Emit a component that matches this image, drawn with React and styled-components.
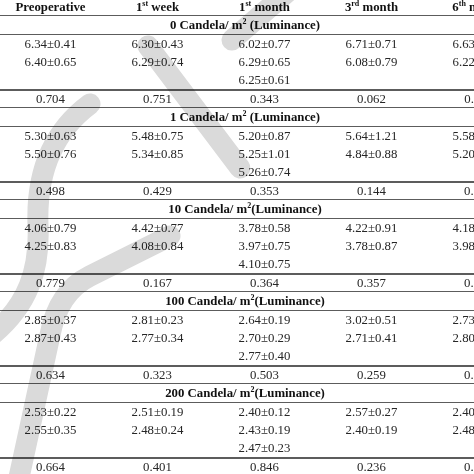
import React from 'react';
import styled, { createGlobalStyle } from 'styled-components';

const GlobalStyle = createGlobalStyle`
  html, body {
    margin: 0;
    padding: 0;
    background: #fff;
    overflow: hidden;
  }
  body {
    font-family: "Liberation Serif", "Times New Roman", serif;
    color: #222;
  }
`;

const blocks = [
  {
    lum: '0',
    gap: true,
    rows: [
      ['6.34±0.41', '6.30±0.43', '6.02±0.77', '6.71±0.71', '6.63±0.72'],
      ['6.40±0.65', '6.29±0.74', '6.29±0.65', '6.08±0.79', '6.22±0.81'],
      ['', '', '6.25±0.61', '', ''],
    ],
    p: ['0.704', '0.751', '0.343', '0.062', '0.118'],
  },
  {
    lum: '1',
    gap: true,
    rows: [
      ['5.30±0.63', '5.48±0.75', '5.20±0.87', '5.64±1.21', '5.58±0.93'],
      ['5.50±0.76', '5.34±0.85', '5.25±1.01', '4.84±0.88', '5.20±0.86'],
      ['', '', '5.26±0.74', '', ''],
    ],
    p: ['0.498', '0.429', '0.353', '0.144', '0.212'],
  },
  {
    lum: '10',
    rows: [
      ['4.06±0.79', '4.42±0.77', '3.78±0.58', '4.22±0.91', '4.18±0.80'],
      ['4.25±0.83', '4.08±0.84', '3.97±0.75', '3.78±0.87', '3.98±0.77'],
      ['', '', '4.10±0.75', '', ''],
    ],
    p: ['0.779', '0.167', '0.364', '0.357', '0.409'],
  },
  {
    lum: '100',
    rows: [
      ['2.85±0.37', '2.81±0.23', '2.64±0.19', '3.02±0.51', '2.73±0.32'],
      ['2.87±0.43', '2.77±0.34', '2.70±0.29', '2.71±0.41', '2.80±0.30'],
      ['', '', '2.77±0.40', '', ''],
    ],
    p: ['0.634', '0.323', '0.503', '0.259', '0.312'],
  },
  {
    lum: '200',
    rows: [
      ['2.53±0.22', '2.51±0.19', '2.40±0.12', '2.57±0.27', '2.40±0.21'],
      ['2.55±0.35', '2.48±0.24', '2.43±0.19', '2.40±0.19', '2.48±0.25'],
      ['', '', '2.47±0.23', '', ''],
    ],
    p: ['0.664', '0.401', '0.846', '0.236', '0.317'],
  },
];

const headers = [
  ['Preoperative'],
  ['1', 'st', ' week'],
  ['1', 'st', ' month'],
  ['3', 'rd', ' month'],
  ['6', 'th', ' month'],
];

const Page = styled.div`
  position: relative;
  width: 474px;
  height: 474px;
  overflow: hidden;
`;

const Table = styled.div`
  width: 535px;
  margin-left: -3px;
  font-size: 12.8px;
`;

const Row = styled.div`
  display: grid;
  grid-template-columns: repeat(5, 107px);
  height: ${(p) => p.$h}px;
  border-bottom: ${(p) => p.$line}px solid #5c5c5c;
`;

const Cell = styled.div`
  display: flex;
  align-items: center;
  justify-content: center;
  white-space: nowrap;
  font-weight: ${(p) => (p.$bold ? 700 : 400)};
  color: ${(p) => (p.$bold ? '#111' : '#262626')};
`;

const SpanRow = styled.div`
  display: flex;
  align-items: center;
  justify-content: center;
  height: 18px;
  padding-right: 39px;
  border-bottom: 1px solid #5c5c5c;
  font-weight: 700;
  color: #111;
  white-space: nowrap;
`;

const Sup = styled.sup`
  font-size: 8px;
  vertical-align: 5px;
  line-height: 0;
`;

const Mark = styled.svg`
  position: absolute;
  left: 0;
  top: 0;
  width: 474px;
  height: 474px;
  pointer-events: none;
  mix-blend-mode: multiply;
`;

const Watermark = () => (
  <Mark viewBox="0 0 474 474">
    <g fill="none" stroke="#dadada" strokeWidth="21" strokeLinecap="round" strokeLinejoin="round">
      <path d="M232 40 L292 -12" />
      <path d="M148 46 L240 168" />
      <path d="M90 104 C55 130 36 170 38 225 C40 270 28 305 -8 335" />
      <path d="M18 482 L50 335 Q58 292 90 276 L170 236" />
    </g>
  </Mark>
);

const App = () => (
  <Page>
    <GlobalStyle />
    <Table>
      <Row $h={15} $line={1}>
        {headers.map((h, i) => (
          <Cell key={i} $bold>
            <span>
              {h[0]}
              {h[1] && <Sup>{h[1]}</Sup>}
              {h[2]}
            </span>
          </Cell>
        ))}
      </Row>
      {blocks.map((b) => (
        <div key={b.lum}>
          <SpanRow>
            <span>
              {b.lum} Candela/ m<Sup>2</Sup>
              {b.gap ? ' ' : ''}(Luminance)
            </span>
          </SpanRow>
          {b.rows.map((r, ri) => (
            <Row key={ri} $h={18} $line={ri === 2 ? 2 : 0}>
              {r.map((v, ci) => (
                <Cell key={ci}>{v}</Cell>
              ))}
            </Row>
          ))}
          <Row $h={16} $line={1}>
            {b.p.map((v, ci) => (
              <Cell key={ci}>{v}</Cell>
            ))}
          </Row>
        </div>
      ))}
    </Table>
    <Watermark />
  </Page>
);

export default App;
